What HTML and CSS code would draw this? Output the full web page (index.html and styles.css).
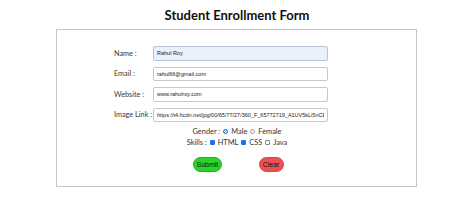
FILE: index.html
```html
<!DOCTYPE html>
<html>
<head>
<meta charset="utf-8">
<link rel="stylesheet" href="styles.css">
</head>
<body>
<h1 class="title">Student Enrollment Form</h1>
<div class="card">
  <form class="form">
    <div class="fields">
      <label class="lbl">Name :</label>
      <input class="inp inp-filled" type="text" value="Rahul Roy">
      <label class="lbl">Email :</label>
      <input class="inp" type="text" value="rahul66@gmail.com">
      <label class="lbl">Website :</label>
      <input class="inp" type="text" value="www.rahulroy.com">
      <label class="lbl">Image Link :</label>
      <input class="inp" type="text" value="https://t4.ftcdn.net/jpg/00/65/77/27/360_F_65772719_A1UV5kLi5nCEWI0BQLLiRbDWkjVtsPCm.jpg">
    </div>
    <div class="line">Gender : <span class="radio on"></span> Male <span class="radio"></span> Female</div>
    <div class="line">Skills : <span class="check on"></span> HTML <span class="check on"></span> CSS <span class="check"></span> Java</div>
    <div class="buttons">
      <button type="button" class="btn btn-submit">Submit</button>
      <button type="button" class="btn btn-clear">Clear</button>
    </div>
  </form>
</div>
</body>
</html>
```
FILE: styles.css
```css
html, body {
  margin: 0;
  padding: 0;
  background: #fff;
}
body {
  font-family: Lato, "Open Sans", sans-serif;
  color: #222;
}
.title {
  margin: 0;
  padding-top: 5px;
  height: 24px;
  text-align: center;
  font-family: Lato, "Open Sans", sans-serif;
  font-size: 13px;
  font-weight: 700;
  line-height: 20px;
  color: #111;
}
.card {
  margin: 0 0 0 56px;
  width: 359px;
  height: 156px;
  border: 1px solid #c4c4c4;
  box-sizing: content-box;
}
.form {
  display: flex;
  flex-direction: column;
}
.fields {
  display: grid;
  grid-template-columns: 39px 175px;
  row-gap: 6px;
  align-items: center;
  margin: 16px 0 0 57px;
}
.lbl {
  font-size: 7.3px;
  color: #3a3a3a;
  white-space: nowrap;
}
.inp {
  box-sizing: border-box;
  height: 14.5px;
  width: 175px;
  margin: 0;
  padding: 0 3px;
  border: 1px solid #c8c8c8;
  border-radius: 2px;
  font-family: "Liberation Sans", Arial, sans-serif;
  font-size: 5.5px;
  color: #222;
  background: #fff;
  outline: none;
}
.inp-filled {
  background: #e8f0fe;
  border-color: #b8c4d6;
}
.line {
  display: flex;
  justify-content: center;
  align-items: center;
  gap: 3px;
  font-size: 7.4px;
  color: #333;
  height: 11px;
  margin-left: 1px;
}
.fields + .line { margin-top: 4px; }
.radio {
  display: inline-block;
  width: 5px;
  height: 5px;
  border-radius: 50%;
  border: 1px solid #999;
  box-sizing: border-box;
  background: #fff;
}
.radio.on {
  border: 1.5px solid #1a73e8;
  background: #1a73e8;
  box-shadow: inset 0 0 0 1px #fff;
}
.check {
  display: inline-block;
  width: 5px;
  height: 5px;
  border: 1px solid #888;
  box-sizing: border-box;
  border-radius: 1px;
  background: #fff;
}
.check.on {
  background: #1a73e8;
  border-color: #1a73e8;
}
.buttons {
  display: flex;
  justify-content: center;
  gap: 37px;
  margin-top: 9px;
  margin-left: 3px;
}
.btn {
  height: 15px;
  padding: 0 3px;
  border: 1px solid #777;
  border-radius: 8px;
  font-family: "Liberation Sans", Arial, sans-serif;
  font-size: 7px;
  color: #111;
  line-height: 13px;
}
.btn-submit {
  background: #2ad42a;
  border-color: #2aa82a;
  width: 29px;
}
.btn-clear {
  background: #ef4f4f;
  border-color: #c84a4a;
  width: 25px;
}
```
